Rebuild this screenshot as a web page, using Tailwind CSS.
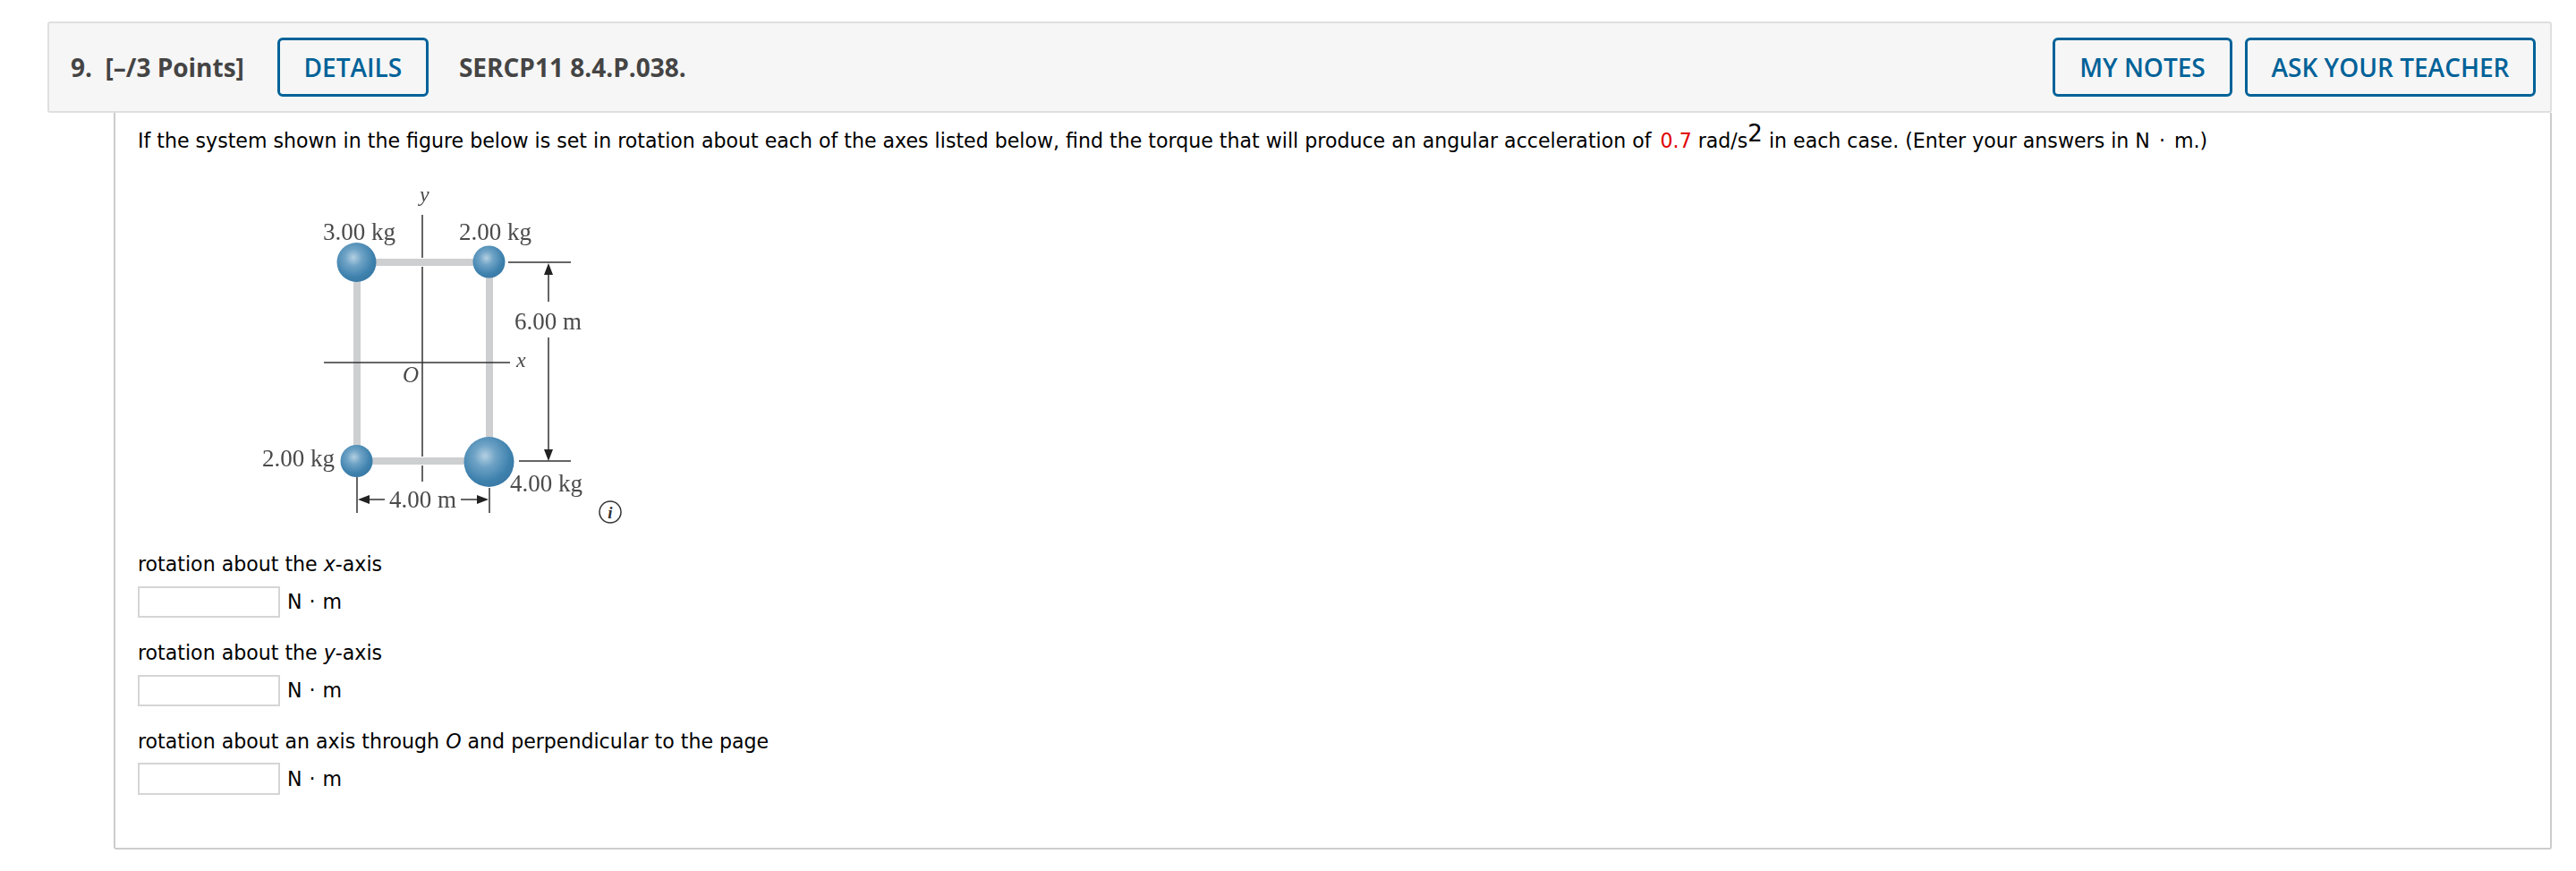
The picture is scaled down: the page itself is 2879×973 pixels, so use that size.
<!DOCTYPE html>
<html lang="en">
<head>
    <meta charset="UTF-8">
    <title>SERCP11 8.4.P.038</title>
    <script src="https://cdn.jsdelivr.net/npm/@tailwindcss/browser@4"></script>
</head>
<body class="bg-white h-[973px] overflow-hidden font-['DejaVu_Sans',sans-serif] text-[22.1px] text-black">
    <div class="w-[2799px] ml-[53px] mt-[24px]">
        <!-- Question header -->
        <div class="h-[102px] flex items-center justify-between bg-[#f6f6f6] border-2 border-[#dfdfdf] rounded-[3px] pl-[24px] pr-[16px] font-['Open_Sans',sans-serif] font-bold text-[28px] text-[#444444]">
            <div class="flex items-center">
                <span class="whitespace-pre">9.  [–/3 Points]</span>
                <button class="h-[66px] w-[169px] ml-[37px] border-[3px] border-[#006298] rounded-[6px] text-[#006298] font-semibold">DETAILS</button>
                <span class="ml-[34px]">SERCP11 8.4.P.038.</span>
            </div>
            <div class="flex items-center gap-[14px] text-[#006298] font-semibold">
                <button class="h-[66px] w-[201px] border-[3px] border-[#006298] rounded-[6px]">MY NOTES</button>
                <button class="h-[66px] w-[325px] border-[3px] border-[#006298] rounded-[6px]">ASK YOUR TEACHER</button>
            </div>
        </div>

        <!-- Question body -->
        <div class="ml-[74px] h-[823px] border-2 border-t-0 border-[#cccccc] rounded-b-[3px] pl-[25px]">
            <p class="pt-[13px] leading-[36px]">If the system shown in the figure below is set in rotation about each of the axes listed below, find the torque that will produce an angular acceleration of <span class="text-[#e00000] ml-[3px]">0.7</span> rad/s<sup class="text-[26px] leading-[0] align-baseline top-[-7px]">2</sup> in each case. (Enter your answers in N <span class="mx-[3px]">·</span> m.)</p>

            <svg class="block ml-[106px] mt-[15px]" width="460" height="410" viewBox="0 0 460 410" font-family="Liberation Serif" font-size="27" fill="#4a4a4a">
                <defs>
                    <radialGradient id="ball" cx="0.42" cy="0.38" r="0.62">
                        <stop offset="0" stop-color="#b4d0e2"/>
                        <stop offset="0.35" stop-color="#6fa3c6"/>
                        <stop offset="0.8" stop-color="#3f82ae"/>
                        <stop offset="1" stop-color="#3a7aa6"/>
                    </radialGradient>
                </defs>
                <g class="blur-[0.4px]">
                    <!-- rods -->
                    <g stroke="#cdcfd1" stroke-width="8" fill="none">
                        <path d="M139 103H287M139 325H287M139 103V325M287 103V325"/>
                    </g>
                    <!-- axes -->
                    <g stroke="#333333" stroke-width="1.5" fill="none">
                        <path d="M212 50V98M212 108V320M212 330V348"/>
                        <path d="M102 215H310"/>
                        <path d="M308 103H378M320 325H378"/>
                        <path d="M353 110V147M353 187V318"/>
                        <path d="M139 343V383M287 355V383"/>
                        <path d="M145 368H170M255 368H281"/>
                    </g>
                    <!-- arrowheads -->
                    <g fill="#222222">
                        <path d="M353 104l-5 13h10zM353 325l-5 -13h10z"/>
                        <path d="M140 368l13 -5v10zM286 368l-13 -5v10z"/>
                    </g>
                    <!-- masses -->
                    <circle cx="138.500" cy="103" r="22" fill="url(#ball)"/>
                    <circle cx="286.500" cy="102.500" r="18" fill="url(#ball)"/>
                    <circle cx="138.500" cy="325" r="18" fill="url(#ball)"/>
                    <circle cx="286.500" cy="326" r="28" fill="url(#ball)"/>
                    <!-- labels -->
                    <text x="101" y="78">3.00 kg</text>
                    <text x="253" y="78">2.00 kg</text>
                    <text x="33" y="331">2.00 kg</text>
                    <text x="310" y="359">4.00 kg</text>
                    <text x="315" y="178">6.00 m</text>
                    <text x="175" y="377">4.00 m</text>
                    <text x="209" y="35" font-style="italic" font-size="24">y</text>
                    <text x="317" y="220" font-style="italic" font-size="24">x</text>
                    <text x="190" y="237" font-style="italic" font-size="25">O</text>
                </g>
                <!-- info icon -->
                <circle cx="422" cy="382" r="12" fill="none" stroke="#333333" stroke-width="1.500"/>
                <text x="422" y="389" text-anchor="middle" font-style="italic" font-weight="bold" font-size="19" fill="#333333">i</text>
            </svg>

            <div class="mt-[12px] leading-[36px]">
                <p>rotation about the <i>x</i>-axis</p>
                <div class="flex items-center mt-[6px]">
                    <input type="text" class="w-[159px] h-[35px] bg-white border-2 border-[#d5d5d5]">
                    <span class="ml-[8px]">N <span class="mx-[1px]">·</span> m</span>
                </div>
                <p class="mt-[21px]">rotation about the <i>y</i>-axis</p>
                <div class="flex items-center mt-[6px]">
                    <input type="text" class="w-[159px] h-[35px] bg-white border-2 border-[#d5d5d5]">
                    <span class="ml-[8px]">N <span class="mx-[1px]">·</span> m</span>
                </div>
                <p class="mt-[21px]">rotation about an axis through <i>O</i> and perpendicular to the page</p>
                <div class="flex items-center mt-[6px]">
                    <input type="text" class="w-[159px] h-[36px] bg-white border-2 border-[#d5d5d5]">
                    <span class="ml-[8px]">N <span class="mx-[1px]">·</span> m</span>
                </div>
            </div>
        </div>
    </div>
</body>
</html>
